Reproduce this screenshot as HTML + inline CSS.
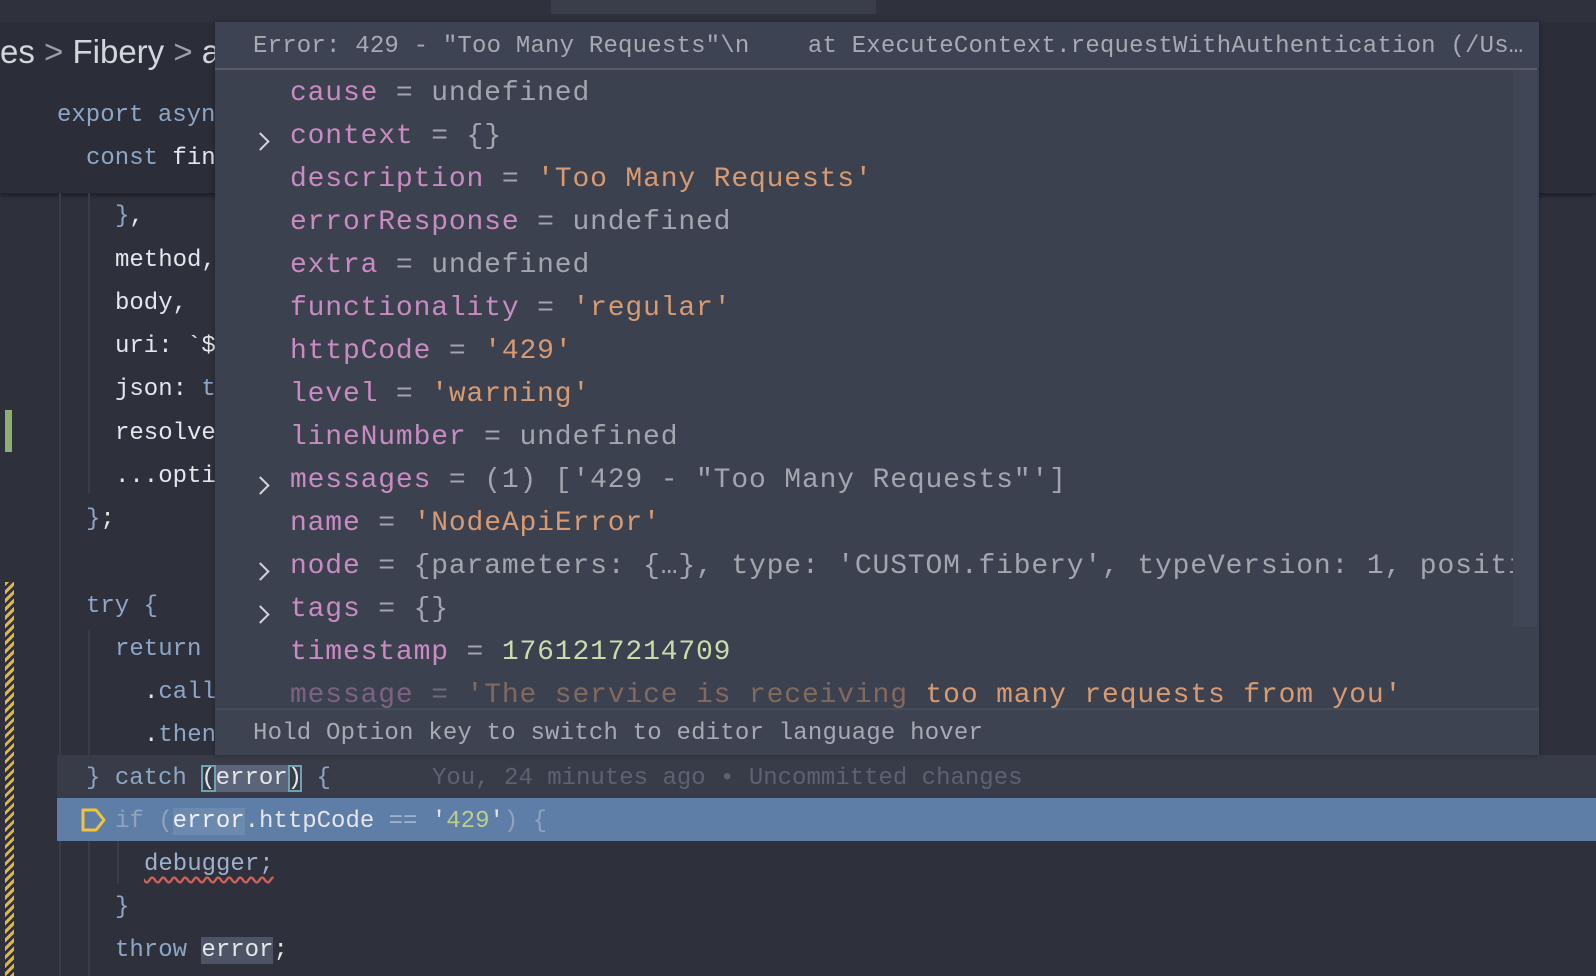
<!DOCTYPE html>
<html><head><meta charset="utf-8"><style>
*{margin:0;padding:0;box-sizing:border-box}
body{width:1596px;height:976px;overflow:hidden;background:#2e313c;position:relative;font-family:"Liberation Mono",monospace}
.a{position:absolute;white-space:pre}
.ed{font-size:24px;line-height:43px;color:#e4e6ea}
.k{color:#8ea6c6}.w{color:#e8e9ec}.b{color:#8ea6c6}
.p{font-size:28px;line-height:43px;color:#a3a6ae;letter-spacing:0.85px}
.pr{color:#c98bc2}.s{color:#d89a70}.n{color:#c9dcaa}
.f{opacity:.45}
.ch{position:absolute;width:13px;height:13px;border-right:2px solid #d0d3da;border-top:2px solid #d0d3da;transform:rotate(45deg)}
</style></head><body>
<div class="a" style="left:0;top:0;width:1596px;height:193px;background:#2b2e38;box-shadow:0 3px 4px rgba(0,0,0,.35)"></div>
<div class="a" style="left:0;top:0;width:1596px;height:22px;background:#2f323d"></div>
<div class="a" style="left:551px;top:0;width:325px;height:14px;background:#3a3e4b"></div>
<div class="a" style="left:5px;top:410px;width:7px;height:42px;background:#8fae72"></div>
<div class="a" style="left:5px;top:582px;width:9px;height:394px;background:repeating-linear-gradient(135deg,#d9b650 0 3px,#2e313c 3px 6px)"></div>
<div class="a" style="left:59px;top:193px;width:2px;height:783px;background:#3a3d48"></div>
<div class="a" style="left:88px;top:193px;width:2px;height:300px;background:#3a3d48"></div>
<div class="a" style="left:88px;top:630px;width:2px;height:125px;background:#3a3d48"></div>
<div class="a" style="left:88px;top:841px;width:2px;height:135px;background:#3a3d48"></div>
<div class="a" style="left:117px;top:841px;width:2px;height:43px;background:#3a3d48"></div>
<div class="a" style="left:57px;top:755px;width:1539px;height:43px;background:#383c48"></div>
<div class="a" style="left:57px;top:798px;width:1539px;height:43px;background:#5f7ea7"></div>
<div class="a" style="left:0;top:29px;font-family:'Liberation Sans',sans-serif;font-size:33px;line-height:46px;color:#d4d6dc">es <span style="color:#9a9da6">&gt;</span> Fibery <span style="color:#9a9da6">&gt;</span> a</div>
<div class="a ed" style="left:57px;top:94px"><span class="k">export asyn</span></div>
<div class="a ed" style="left:86px;top:137px"><span class="k">const</span> fin</div>
<div class="a ed" style="left:115px;top:195px"><span class="b">}</span>,</div>
<div class="a ed" style="left:115px;top:239px">method,</div>
<div class="a ed" style="left:115px;top:282px">body,</div>
<div class="a ed" style="left:115px;top:325px">uri: `$</div>
<div class="a ed" style="left:115px;top:368px">json: <span class="k">t</span></div>
<div class="a ed" style="left:115px;top:412px">resolve</div>
<div class="a ed" style="left:115px;top:455px">...opti</div>
<div class="a ed" style="left:86px;top:498px"><span class="b">}</span>;</div>
<div class="a ed" style="left:86px;top:585px"><span class="k">try</span> <span class="b">{</span></div>
<div class="a ed" style="left:115px;top:628px"><span class="k">return</span></div>
<div class="a ed" style="left:144px;top:671px">.<span class="k">call</span></div>
<div class="a ed" style="left:144px;top:714px">.<span class="k">then</span></div>
<div class="a ed" style="left:86px;top:757px"><span class="b">}</span> <span class="k">catch</span> <span style="outline:2px solid #6fa3b3;outline-offset:-2px">(</span><span style="background:#5b6478">error</span><span style="outline:2px solid #6fa3b3;outline-offset:-2px">)</span> <span class="b">{</span></div>
<div class="a ed" style="left:432px;top:757px;color:#5d6272">You, 24 minutes ago • Uncommitted changes</div>
<svg class="a" style="left:80px;top:807px" width="28" height="26"><path d="M3 3 H16 L24 13 L16 23 H3 Z" fill="none" stroke="#f0c43c" stroke-width="3" stroke-linejoin="round"/></svg>
<div class="a ed" style="left:115px;top:800px"><span style="color:#8ea3be">if (</span><span style="background:#6c8ab0;color:#eef">error</span>.httpCode <span style="color:#9fb3cf">==</span> '<span style="color:#b9d08a">429</span>'<span style="color:#8ea3be">) {</span></div>
<div class="a ed" style="left:144px;top:843px;color:#9fb0cf;text-decoration:underline wavy #d0605c;text-underline-offset:6px">debugger;</div>
<div class="a ed" style="left:115px;top:886px"><span class="b">}</span></div>
<div class="a ed" style="left:115px;top:929px"><span class="k">throw</span> <span style="background:#4d5466">error</span>;</div>
<div class="a" style="left:215px;top:22px;width:1324px;height:733px;background:#3c4150;overflow:hidden;box-shadow:0 0 6px rgba(0,0,0,.3)">
  <div class="a" style="left:0;top:0;width:1324px;height:46px;background:#3e4354"></div>
  <div class="a" style="left:38px;top:4px;font-size:24px;line-height:42px;color:#a7aab2;letter-spacing:0.2px">Error: 429 - "Too Many Requests"\n    at ExecuteContext.requestWithAuthentication (/Us…</div>
  <div class="a" style="left:0;top:46px;width:1322px;height:2px;background:#575c68"></div>
  <div class="a" style="left:1298px;top:48px;width:24px;height:557px;background:#414656"></div>
  <div class="a" style="left:0;top:48px;width:1298px;height:640px;overflow:hidden">
    <div class="a p" style="left:75px;top:2px"><span class="pr">cause</span> = undefined</div>
    <div class="a p" style="left:75px;top:45px"><span class="pr">context</span> = {}</div>
    <div class="a p" style="left:75px;top:88px"><span class="pr">description</span> = <span class="s">'Too Many Requests'</span></div>
    <div class="a p" style="left:75px;top:131px"><span class="pr">errorResponse</span> = undefined</div>
    <div class="a p" style="left:75px;top:174px"><span class="pr">extra</span> = undefined</div>
    <div class="a p" style="left:75px;top:217px"><span class="pr">functionality</span> = <span class="s">'regular'</span></div>
    <div class="a p" style="left:75px;top:260px"><span class="pr">httpCode</span> = <span class="s">'429'</span></div>
    <div class="a p" style="left:75px;top:303px"><span class="pr">level</span> = <span class="s">'warning'</span></div>
    <div class="a p" style="left:75px;top:346px"><span class="pr">lineNumber</span> = undefined</div>
    <div class="a p" style="left:75px;top:389px"><span class="pr">messages</span> = (1) ['429 - "Too Many Requests"']</div>
    <div class="a p" style="left:75px;top:432px"><span class="pr">name</span> = <span class="s">'NodeApiError'</span></div>
    <div class="a p" style="left:75px;top:475px"><span class="pr">node</span> = {parameters: {…}, type: 'CUSTOM.fibery', typeVersion: 1, position</div>
    <div class="a p" style="left:75px;top:518px"><span class="pr">tags</span> = {}</div>
    <div class="a p" style="left:75px;top:561px"><span class="pr">timestamp</span> = <span class="n">1761217214709</span></div>
    <div class="a p" style="left:75px;top:604px"><span class="f"><span class="pr">message</span> = <span class="s">'The service is receiving</span></span><span class="s"> too many requests from you'</span></div>
    <div class="ch" style="left:39px;top:65px"></div>
    <div class="ch" style="left:39px;top:409px"></div>
    <div class="ch" style="left:39px;top:495px"></div>
    <div class="ch" style="left:39px;top:538px"></div>
  </div>
  <div class="a" style="left:0;top:686px;width:1324px;height:2px;background:#474c59"></div>
  <div class="a" style="left:0;top:688px;width:1324px;height:45px;background:#3e4352"></div>
  <div class="a" style="left:38px;top:690px;font-size:24px;line-height:43px;color:#a7aab2;letter-spacing:0.2px">Hold Option key to switch to editor language hover</div>
</div>
</body></html>
